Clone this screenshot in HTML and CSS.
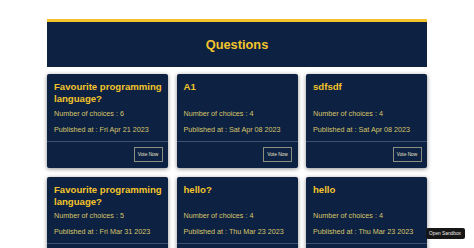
FILE: index.html
```html
<!DOCTYPE html>
<html>
<head>
<meta charset="utf-8">
<link rel="stylesheet" href="styles.css">
</head>
<body>
<div class="page">
  <header class="banner"><h1>Questions</h1></header>
  <div class="grid">
    <div class="card">
      <div class="card-body">
        <h2>Favourite programming language?</h2>
        <p>Number of choices : 6</p>
        <p>Published at : Fri Apr 21 2023</p>
      </div>
      <div class="card-foot"><button class="vote">Vote Now</button></div>
    </div>
    <div class="card">
      <div class="card-body">
        <h2>A1</h2>
        <p>Number of choices : 4</p>
        <p>Published at : Sat Apr 08 2023</p>
      </div>
      <div class="card-foot"><button class="vote">Vote Now</button></div>
    </div>
    <div class="card">
      <div class="card-body">
        <h2>sdfsdf</h2>
        <p>Number of choices : 4</p>
        <p>Published at : Sat Apr 08 2023</p>
      </div>
      <div class="card-foot"><button class="vote">Vote Now</button></div>
    </div>
    <div class="card">
      <div class="card-body">
        <h2>Favourite programming language?</h2>
        <p>Number of choices : 5</p>
        <p>Published at : Fri Mar 31 2023</p>
      </div>
      <div class="card-foot"><button class="vote">Vote Now</button></div>
    </div>
    <div class="card">
      <div class="card-body">
        <h2>hello?</h2>
        <p>Number of choices : 4</p>
        <p>Published at : Thu Mar 23 2023</p>
      </div>
      <div class="card-foot"><button class="vote">Vote Now</button></div>
    </div>
    <div class="card">
      <div class="card-body">
        <h2>hello</h2>
        <p>Number of choices : 4</p>
        <p>Published at : Thu Mar 23 2023</p>
      </div>
      <div class="card-foot"><button class="vote">Vote Now</button></div>
    </div>
  </div>
</div>
<div class="sandbox-tip">Open Sandbox</div>
</body>
</html>
```
FILE: styles.css
```css
html, body {
  margin: 0;
  padding: 0;
  background: #ffffff;
  font-family: "Liberation Sans", Arial, sans-serif;
  overflow: hidden;
}
.page {
  width: 380px;
  margin: 19px auto 0;
}
.banner {
  background: #0d2142;
  border-top: 3px solid #f5c42c;
  height: 45px;
  display: flex;
  align-items: center;
  justify-content: center;
}
.banner h1 {
  margin: 0;
  color: #f3c42b;
  font-size: 12.8px;
  font-weight: bold;
}
.grid {
  margin-top: 7px;
  display: grid;
  grid-template-columns: repeat(3, 121px);
  column-gap: 8.5px;
  row-gap: 9px;
}
.card {
  background: #0d2142;
  border-radius: 2px;
  box-shadow: 0 1px 4px rgba(0, 0, 0, 0.45);
  height: 93.5px;
  display: flex;
  flex-direction: column;
}
.card-body {
  padding: 7px 4px 0 7px;
  height: 59.7px;
}
.card-body h2 {
  margin: 0;
  height: 24px;
  color: #f3c42b;
  font-size: 9.6px;
  line-height: 12px;
  font-weight: bold;
}
.card-body p {
  margin: 4.5px 0 0;
  color: #d8c66a;
  font-size: 7.2px;
  line-height: 8.3px;
}
.card-body p + p {
  margin-top: 8px;
}
.card-foot {
  border-top: 1px solid #3b5274;
  flex: 1;
  display: flex;
  align-items: center;
  justify-content: flex-end;
  padding-right: 5.5px;
}
.vote {
  background: transparent;
  border: 1px solid #8c8f80;
  color: #e8e3c8;
  font-family: "Liberation Sans", Arial, sans-serif;
  font-size: 4.8px;
  width: 29px;
  height: 14.5px;
  padding: 0;
  margin: 0;
}
.sandbox-tip {
  position: fixed;
  left: 425.5px;
  top: 228px;
  width: 39px;
  height: 11px;
  background: #161616;
  border-radius: 2px;
  color: #f0f0f0;
  font-size: 4.8px;
  line-height: 11px;
  text-align: center;
}
```
